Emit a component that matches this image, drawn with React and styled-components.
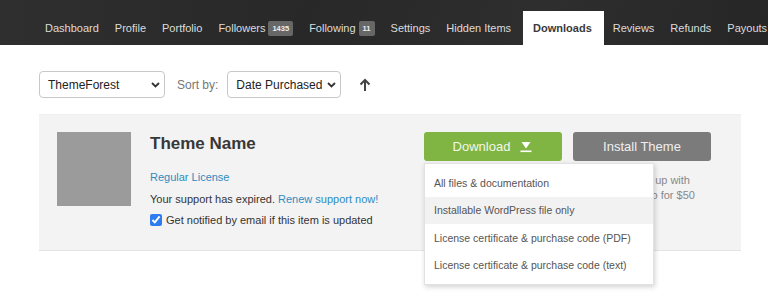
import styled, { createGlobalStyle } from 'styled-components';

const GlobalStyle = createGlobalStyle`
  body {
    margin: 0;
    background: #fff;
    font-family: 'Liberation Sans', Arial, sans-serif;
    color: #333;
  }
`;

const navItems = [
  { label: 'Dashboard' },
  { label: 'Profile' },
  { label: 'Portfolio' },
  { label: 'Followers', badge: '1435' },
  { label: 'Following', badge: '11' },
  { label: 'Settings' },
  { label: 'Hidden Items' },
  { label: 'Downloads', active: true },
  { label: 'Reviews' },
  { label: 'Refunds' },
  { label: 'Payouts' },
];

const downloadOptions = [
  'All files & documentation',
  'Installable WordPress file only',
  'License certificate & purchase code (PDF)',
  'License certificate & purchase code (text)',
];

const Chevron = () => (
  <svg width='9' height='6' viewBox='0 0 9 6'>
    <path d='M1 1l3.5 3.5L8 1' fill='none' stroke='#333' strokeWidth='1.8' />
  </svg>
);

const App = () => {
  return (
    <Page>
      <GlobalStyle />
      <NavBar>
        {navItems.map((item) => (
          <NavItem key={item.label} $active={item.active}>
            {item.label}
            {item.badge && <Badge>{item.badge}</Badge>}
          </NavItem>
        ))}
      </NavBar>

      <Content>
        <Filters>
          <Select $width={126}>
            ThemeForest
            <Chevron />
          </Select>
          <SortLabel>Sort by:</SortLabel>
          <Select $width={114}>
            Date Purchased
            <Chevron />
          </Select>
          <SortArrow width='12' height='14' viewBox='0 0 12 14'>
            <path d='M6 13V2M1.5 6.5L6 2l4.5 4.5' fill='none' stroke='#444' strokeWidth='2' />
          </SortArrow>
        </Filters>

        <Card>
          <Thumb />
          <Info>
            <Title>Theme Name</Title>
            <License>Regular License</License>
            <Line>
              Your support has expired. <a>Renew support now!</a>
            </Line>
            <CheckLine>
              <input type='checkbox' defaultChecked />
              Get notified by email if this item is updated
            </CheckLine>
          </Info>
          <Actions>
            <DownloadWrap>
              <Button $color='#80b543' $text='#f2f7ea'>
                Download
                <svg width='14' height='12' viewBox='0 0 14 12'>
                  <path d='M2.5 1h9L7 7.5z' fill='#fff' />
                  <rect x='1.5' y='9.5' width='11' height='1.6' fill='#fff' />
                </svg>
              </Button>
              <Menu>
                {downloadOptions.map((opt, i) => (
                  <MenuItem key={opt} $hover={i === 1}>
                    {opt}
                  </MenuItem>
                ))}
              </Menu>
            </DownloadWrap>
            <InstallCol>
              <Button $color='#7b7b7b' $text='#efefef'>
                Install Theme
              </Button>
              <Note>
                Get it all set up with
                <br />
                Envato Studio for $50
              </Note>
            </InstallCol>
          </Actions>
        </Card>
      </Content>
    </Page>
  );
};

export default App;

const Page = styled.div`
  width: 768px;
  height: 305px;
  overflow: hidden;
`;

const NavBar = styled.nav`
  display: flex;
  align-items: flex-end;
  height: 45px;
  padding-left: 37px;
  background: linear-gradient(100deg, #2f2f2f 0%, #282828 40%, #2e2e2e 70%, #262626 100%);
  white-space: nowrap;
  overflow: hidden;
`;

const NavItem = styled.div`
  display: flex;
  align-items: center;
  flex-shrink: 0;
  height: 34px;
  padding: ${({ $active }) => ($active ? '0 12px 0 10px' : '0 8px')};
  margin: ${({ $active }) => ($active ? '0 1px 0 4px' : '0')};
  font-size: 11px;
  font-weight: ${({ $active }) => ($active ? 700 : 400)};
  color: ${({ $active }) => ($active ? '#3a3a3a' : '#dcdcdc')};
  background: ${({ $active }) => ($active ? '#fff' : 'transparent')};
`;

const Badge = styled.span`
  display: inline-flex;
  align-items: center;
  justify-content: center;
  height: 15px;
  min-width: 7px;
  margin-left: 3px;
  padding: 0 4px;
  border-radius: 2px;
  background: #676767;
  color: #eee;
  font-size: 7.5px;
  font-weight: 700;
`;

const Content = styled.div`
  padding: 26px 27px 0 39px;
`;

const Filters = styled.div`
  display: flex;
  align-items: center;
  height: 27px;
`;

const Select = styled.div`
  display: flex;
  align-items: center;
  justify-content: space-between;
  box-sizing: border-box;
  width: ${({ $width }) => $width}px;
  height: 27px;
  padding: 0 4px 0 8px;
  border: 1px solid #c8c8c8;
  border-radius: 4px;
  background: #fff;
  font-size: 12px;
  color: #222;
`;

const SortLabel = styled.span`
  margin: 0 9px 0 12px;
  font-size: 12px;
  color: #777;
`;

const SortArrow = styled.svg`
  margin-left: 18px;
`;

const Card = styled.div`
  display: flex;
  margin-top: 16px;
  height: 137px;
  box-sizing: border-box;
  padding: 17px 30px 0 18px;
  background: #f3f3f3;
  border-top: 1px solid #efefef;
  border-bottom: 1px solid #e4e4e4;
`;

const Thumb = styled.div`
  width: 74px;
  height: 74px;
  flex-shrink: 0;
  background: #9b9b9b;
`;

const Info = styled.div`
  flex: 1;
  margin-left: 19px;
  font-size: 11px;
  color: #333;
`;

const Title = styled.h2`
  margin: 2px 0 0;
  font-size: 17px;
  line-height: 20px;
  font-weight: 700;
  color: #383838;
`;

const License = styled.a`
  display: block;
  margin-top: 16px;
  line-height: 14px;
  color: #2f8cc1;
`;

const Line = styled.div`
  margin-top: 8px;
  line-height: 14px;

  a {
    color: #2f8cc1;
  }
`;

const CheckLine = styled.label`
  display: flex;
  align-items: center;
  margin-top: 7px;
  line-height: 14px;

  input {
    width: 12px;
    height: 12px;
    margin: 0 4px 0 0;
    accent-color: #2f7cf0;
  }
`;

const Actions = styled.div`
  display: flex;
  gap: 11px;
`;

const DownloadWrap = styled.div`
  position: relative;
`;

const InstallCol = styled.div`
  display: flex;
  flex-direction: column;
`;

const Button = styled.div`
  display: flex;
  align-items: center;
  justify-content: center;
  gap: 9px;
  width: 138px;
  height: 29px;
  border-radius: 3px;
  background: ${({ $color }) => $color};
  color: ${({ $text }) => $text};
  font-size: 13px;
`;

const Note = styled.div`
  margin-top: 12px;
  font-size: 11px;
  line-height: 15px;
  color: #888;
  text-align: center;
`;

const Menu = styled.div`
  position: absolute;
  top: 31px;
  left: 0;
  z-index: 2;
  width: 228px;
  padding: 5px 0 5px;
  background: #fff;
  border: 1px solid #e2e2e2;
  box-shadow: 1px 2px 5px rgba(0, 0, 0, 0.18);
`;

const MenuItem = styled.div`
  display: flex;
  align-items: center;
  height: 27.5px;
  padding-left: 9px;
  font-size: 10.5px;
  color: #555;
  white-space: nowrap;
  background: ${({ $hover }) => ($hover ? '#f2f2f2' : 'transparent')};
`;
